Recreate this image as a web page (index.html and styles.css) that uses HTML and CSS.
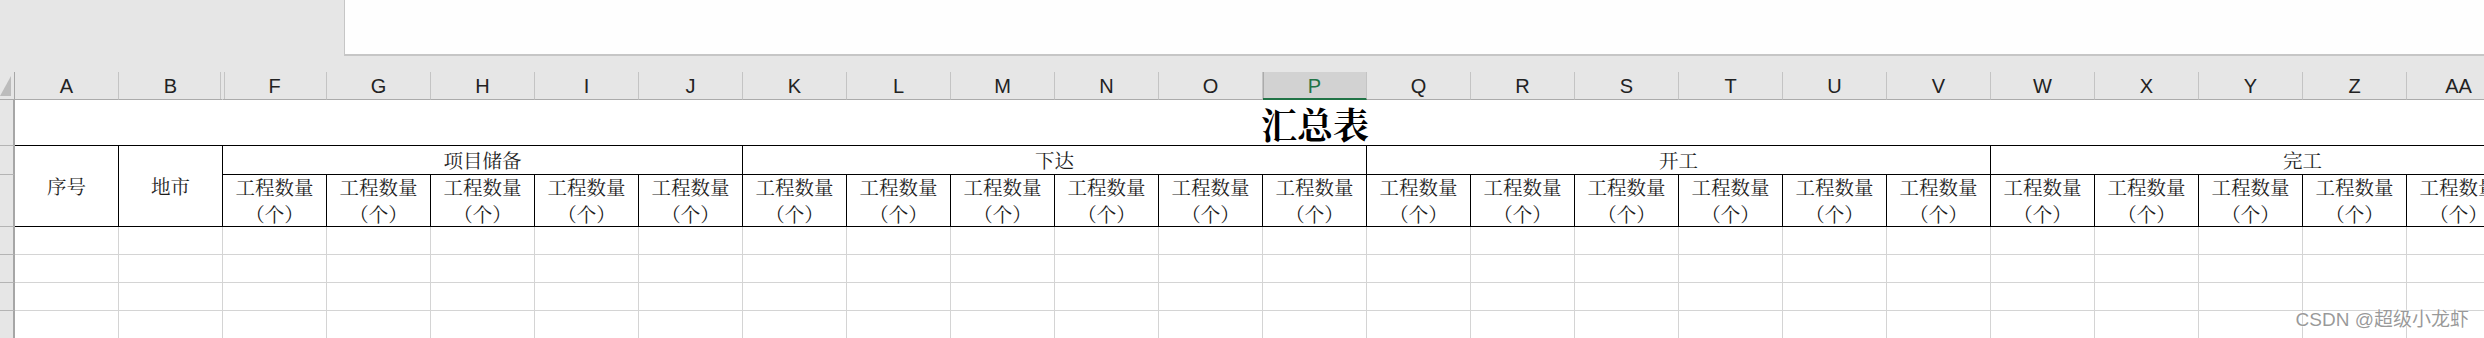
FILE: index.html
```html
<!DOCTYPE html>
<html lang="zh-CN">
<head>
  <meta charset="utf-8">
  <meta name="viewport" content="width=device-width, initial-scale=1.0">
  <title>汇总表</title>
  <link rel="stylesheet" href="styles.css">
</head>
<body>

  <div class="toolbar">
    <div class="toolbar-left"></div>
    <div class="formula-box"></div>
  </div>

  <div class="sheet" id="sheet"></div>

  <div class="watermark">CSDN @超级小龙虾</div>

  <script>
    // 可见列（C~E 已隐藏）
    const cols = ["A", "B", "F", "G", "H", "I", "J", "K", "L", "M", "N", "O", "P",
                  "Q", "R", "S", "T", "U", "V", "W", "X", "Y", "Z", "AA", "AB"];
    const groups = [["项目储备", 5], ["下达", 6], ["开工", 6], ["完工", 6]];
    const sheet = document.getElementById("sheet");

    function cell(cls, html) {
      const d = document.createElement("div");
      d.className = cls;
      if (html) d.innerHTML = html;
      sheet.appendChild(d);
      return d;
    }

    // 列标题行
    cell("corner", '<svg width="11" height="20" viewBox="0 0 11 20"><polygon points="11,0 11,20 0,20" fill="#bcbcbc"/></svg>');
    cols.forEach(c => {
      let cls = "col-hdr";
      if (c === "B") cls += " before-hidden";
      if (c === "F") cls += " after-hidden";
      if (c === "P") cls += " selected";
      cell(cls, c);
    });

    // 第1行：标题
    cell("row-hdr");
    cell("c title", "汇总表");

    // 第2行：分组表头
    cell("row-hdr");
    cell("c hd tall", "序号");
    cell("c hd tall", "地市");
    groups.forEach(([name, span]) => {
      const g = cell("c hd", name);
      g.style.gridColumn = "span " + span;
    });

    // 第3行：工程数量
    cell("row-hdr");
    for (let i = 0; i < 23; i++) {
      cell("c hd", "工程数量<br>（个）");
    }

    // 空白数据行
    for (let r = 0; r < 4; r++) {
      cell("row-hdr");
      cols.forEach(() => cell("c"));
    }
  </script>
</body>
</html>
```

FILE: styles.css
```css
body {
  margin: 0;
  width: 2484px;
  height: 338px;
  overflow: hidden;
  background-color: #e6e6e6;
  position: relative;
  font-family: "Noto Serif CJK SC", "Noto Sans CJK SC", serif;
}

.toolbar {
  display: flex;
  height: 56px;
  margin-bottom: 16px;
}
.toolbar-left { width: 344px; }
.formula-box {
  flex: 1;
  background-color: #fefefe;
  border-left: 1px solid #c6c6c6;
  border-bottom: 2px solid #c6c6c6;
  box-sizing: border-box;
}

/* 表格网格：行号列 + 25 个可见列 */
.sheet {
  display: grid;
  grid-template-columns: 15px repeat(25, 104px);
  grid-template-rows: 28px 46px 29px 52px 28px 28px 28px 28px;
  width: 2615px;
}
.sheet > div { box-sizing: border-box; }

.corner {
  border-right: 1px solid #a6a6a6;
  border-bottom: 1px solid #ababab;
  display: flex;
  align-items: flex-end;
  padding-bottom: 3px;
}
.corner svg { display: block; }

.col-hdr {
  display: flex;
  align-items: center;
  justify-content: center;
  border-right: 1px solid #c4c4c4;
  border-bottom: 1px solid #ababab;
  font-family: "Liberation Sans", Arial, sans-serif;
  font-size: 20px;
  color: #222;
  padding-top: 2px;
}
.col-hdr.before-hidden {
  border-right-color: #e6e6e6;
  box-shadow: inset -1px 0 0 #e6e6e6, inset -2px 0 0 #c4c4c4;
}
.col-hdr.after-hidden {
  box-shadow: inset 1px 0 0 #e6e6e6, inset 2px 0 0 #c4c4c4;
}
.col-hdr.selected {
  background-color: #d2d2d2;
  color: #217346;
  border-bottom: 2px solid #217346;
  box-shadow: inset 1px 0 0 #ababab;
}

.row-hdr {
  grid-column: 1;
  border-right: 2px solid #a6a6a6;
  border-bottom: 1px solid #b4b4b4;
}

.c {
  background-color: #fff;
  border-right: 1px solid #d4d4d4;
  border-bottom: 1px solid #d4d4d4;
  display: flex;
  align-items: center;
  justify-content: center;
  text-align: center;
  font-size: 19.5px;
  line-height: 27px;
  color: #1e1e1e;
}

.title {
  grid-column: span 25;
  border-right: none;
  border-bottom-color: #000;
  font-size: 36px;
  font-weight: bold;
  color: #000;
  padding-top: 2px;
}

.hd { border-color: #000; }
.tall { grid-row: span 2; }

.watermark {
  position: absolute;
  right: 15px;
  bottom: 7px;
  font-family: "Liberation Sans", "Noto Sans CJK SC", sans-serif;
  font-size: 19px;
  color: rgba(120, 120, 120, 0.75);
  text-shadow: 0 0 2px #fff, 0 0 1px #fff;
}
```
